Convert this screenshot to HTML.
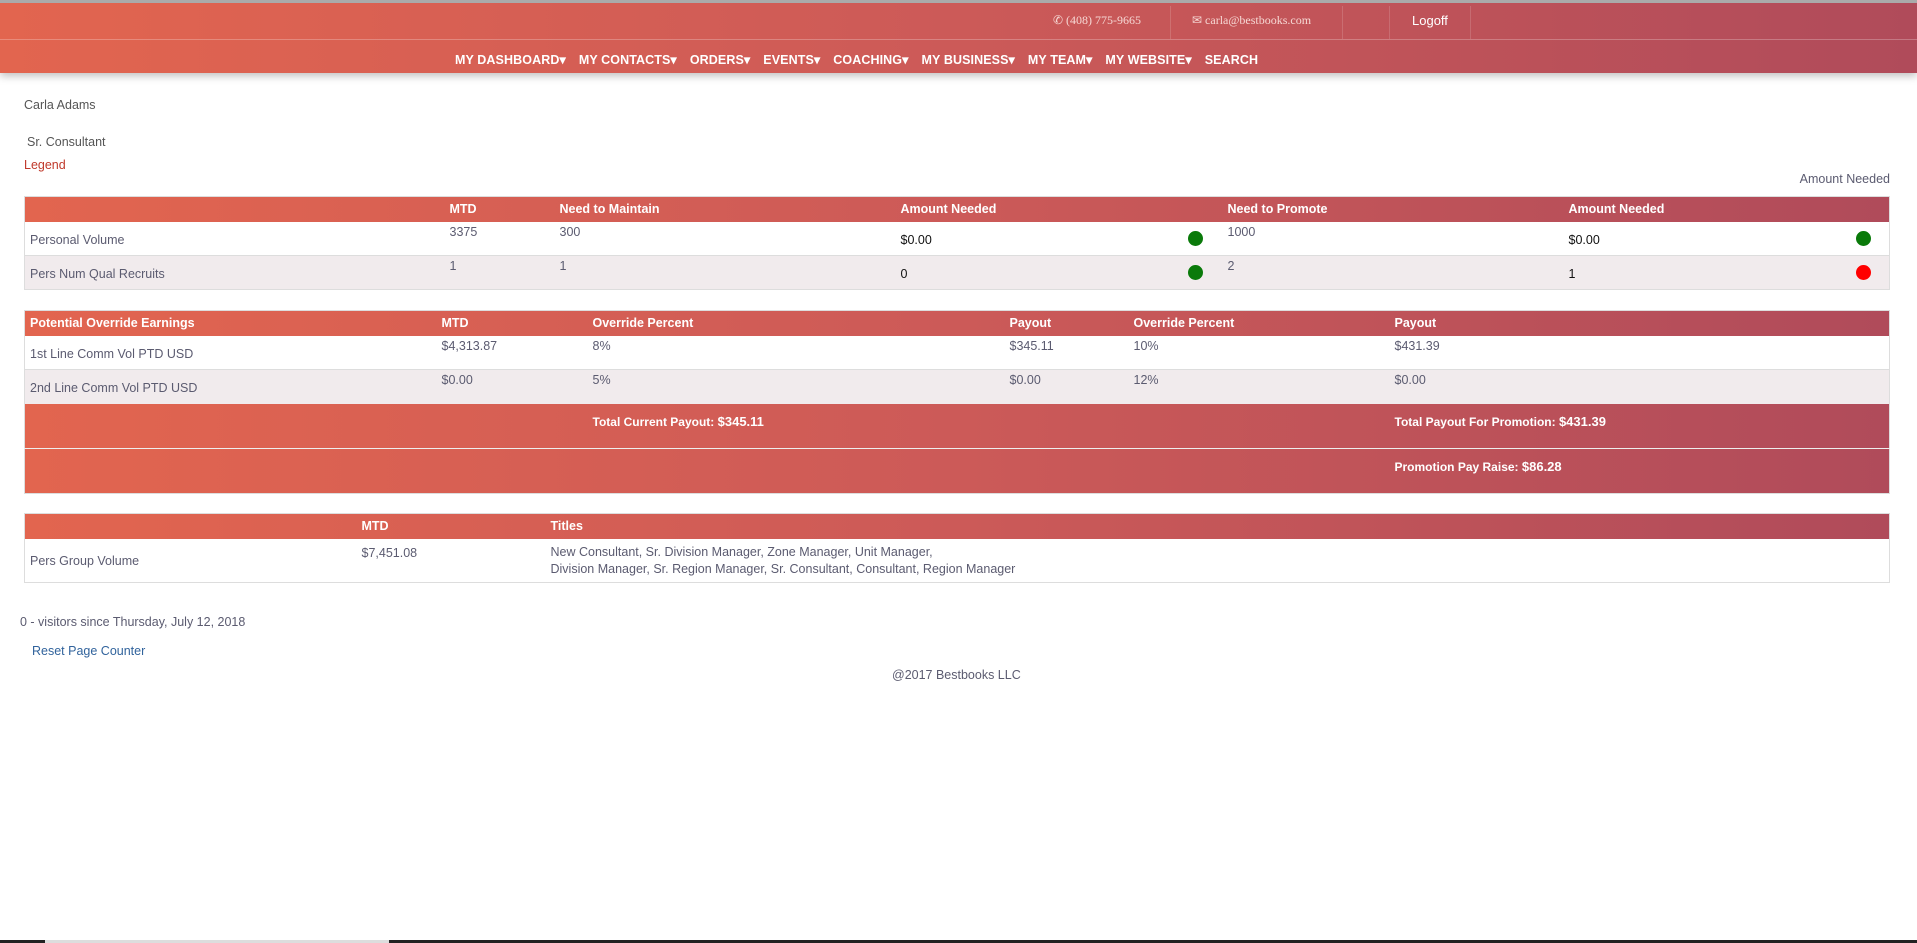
<!DOCTYPE html>
<html><head><meta charset="utf-8"><style>
*{box-sizing:border-box;margin:0;padding:0}
body{width:1917px;height:943px;overflow:hidden;background:#fff;font-family:"Liberation Sans",Tahoma,sans-serif;font-size:12.5px;color:#555;position:relative}
.grad{background:linear-gradient(to right,#e2654f,#cc5a58 50%,#b04b5a)}
#hdr{position:absolute;left:0;top:0;width:1917px;height:73px;border-top:3px solid #aaa;box-shadow:0 3px 8px rgba(0,0,0,.25)}
#hdr .line{position:absolute;left:0;top:36px;width:100%;height:1px;background:rgba(255,255,255,.25)}
.tp{position:absolute;top:10px;color:#f6d8d4;font-family:"Liberation Serif",serif;font-size:12px}
.sep{position:absolute;top:3px;height:33px;width:1px;background:rgba(255,255,255,.15)}
#nav{position:absolute;top:49px;left:455px;color:#fff;font-weight:bold;font-size:12.5px;white-space:nowrap;letter-spacing:.1px}
#nav span{margin-right:13px}
.abs{position:absolute}
table{position:absolute;left:24px;width:1866px;border-collapse:collapse;border:1px solid #ddd}
td,th{padding:0 5px;text-align:left;vertical-align:top}
th{color:#fff;font-weight:bold;font-size:12.5px;padding-top:5px}
td{color:#5b5b70;font-size:12.5px}
.alt{background:#f1ebed}
tr.r td{border-top:1px solid #ddd}
.dot{display:inline-block;width:15px;height:15px;border-radius:50%;margin-top:9px}
.blk{color:#111}
</style></head><body>
<div id="hdr" class="grad">
<div class="line"></div>
<div class="tp" style="left:1053px">&#9990; (408) 775-9665</div>
<div class="sep" style="left:1170px"></div>
<div class="tp" style="left:1192px">&#9993; carla@bestbooks.com</div>
<div class="sep" style="left:1342px"></div>
<div class="sep" style="left:1389px"></div>
<div class="tp" style="left:1412px;color:#fff;font-family:'Liberation Sans',sans-serif;font-size:13px">Logoff</div>
<div class="sep" style="left:1470px"></div>
<div id="nav"><span>MY DASHBOARD▾</span><span>MY CONTACTS▾</span><span>ORDERS▾</span><span>EVENTS▾</span><span>COACHING▾</span><span>MY BUSINESS▾</span><span>MY TEAM▾</span><span>MY WEBSITE▾</span><span>SEARCH</span></div>
</div>
<div class="abs" style="left:24px;top:98px">Carla Adams</div>
<div class="abs" style="left:27px;top:135px">Sr. Consultant</div>
<div class="abs" style="left:24px;top:158px;color:#c0392b">Legend</div>
<div class="abs" style="right:27px;top:172px;color:#5b5b70">Amount Needed</div>

<table style="top:196px">
<tr class="grad" style="height:25px"><th style="width:420px"></th><th style="width:110px">MTD</th><th style="width:341px">Need to Maintain</th><th style="width:287px">Amount Needed</th><th style="width:40px"></th><th style="width:341px">Need to Promote</th><th style="width:286px">Amount Needed</th><th></th></tr>
<tr style="height:34px"><td style="padding-top:11px">Personal Volume</td><td style="padding-top:3px">3375</td><td style="padding-top:3px">300</td><td class="blk" style="padding-top:11px">$0.00</td><td><span class="dot" style="background:#0a7a0a"></span></td><td style="padding-top:3px">1000</td><td class="blk" style="padding-top:11px">$0.00</td><td style="text-align:right;padding-right:18px"><span class="dot" style="background:#0a7a0a"></span></td></tr>
<tr class="alt r" style="height:34px"><td style="padding-top:11px">Pers Num Qual Recruits</td><td style="padding-top:3px">1</td><td style="padding-top:3px">1</td><td class="blk" style="padding-top:11px">0</td><td><span class="dot" style="background:#0a7a0a"></span></td><td style="padding-top:3px">2</td><td class="blk" style="padding-top:11px">1</td><td style="text-align:right;padding-right:18px"><span class="dot" style="background:#f00"></span></td></tr>
</table>

<table style="top:310px">
<tr class="grad" style="height:25px"><th style="width:412px">Potential Override Earnings</th><th style="width:151px">MTD</th><th style="width:417px">Override Percent</th><th style="width:124px">Payout</th><th style="width:261px">Override Percent</th><th>Payout</th></tr>
<tr style="height:34px"><td style="padding-top:11px">1st Line Comm Vol PTD USD</td><td style="padding-top:3px">$4,313.87</td><td style="padding-top:3px">8%</td><td style="padding-top:3px">$345.11</td><td style="padding-top:3px">10%</td><td style="padding-top:3px">$431.39</td></tr>
<tr class="alt r" style="height:34px"><td style="padding-top:11px">2nd Line Comm Vol PTD USD</td><td style="padding-top:3px">$0.00</td><td style="padding-top:3px">5%</td><td style="padding-top:3px">$0.00</td><td style="padding-top:3px">12%</td><td style="padding-top:3px">$0.00</td></tr>
<tr class="grad r" style="height:45px"><th></th><th></th><th colspan="3" style="padding-top:10px;font-size:12px">Total Current Payout: <span style="font-size:13px">$345.11</span></th><th style="padding-top:10px;font-size:12px">Total Payout For Promotion: <span style="font-size:13px">$431.39</span></th></tr>
<tr class="grad" style="height:45px;border-top:1px solid #eee"><th colspan="5"></th><th style="padding-top:10px;font-size:12px">Promotion Pay Raise: <span style="font-size:13px">$86.28</span></th></tr>
</table>

<table style="top:513px">
<tr class="grad" style="height:25px"><th style="width:332px"></th><th style="width:189px">MTD</th><th>Titles</th></tr>
<tr style="height:44px"><td style="padding-top:15px">Pers Group Volume</td><td style="padding-top:7px">$7,451.08</td><td style="padding-top:5px;line-height:17px">New Consultant, Sr. Division Manager, Zone Manager, Unit Manager,<br>Division Manager, Sr. Region Manager, Sr. Consultant, Consultant, Region Manager</td></tr>
</table>

<div class="abs" style="left:20px;top:615px;color:#5b5b70">0 - visitors since Thursday, July 12, 2018</div>
<div class="abs" style="left:32px;top:644px;color:#31639c">Reset Page Counter</div>
<div class="abs" style="left:892px;top:668px;color:#5b5b70">@2017 Bestbooks LLC</div>
<div class="abs" style="left:0;top:940px;width:1917px;height:3px;background:#222"></div>
<div class="abs" style="left:45px;top:940px;width:344px;height:3px;background:#ddd"></div>
</body></html>
